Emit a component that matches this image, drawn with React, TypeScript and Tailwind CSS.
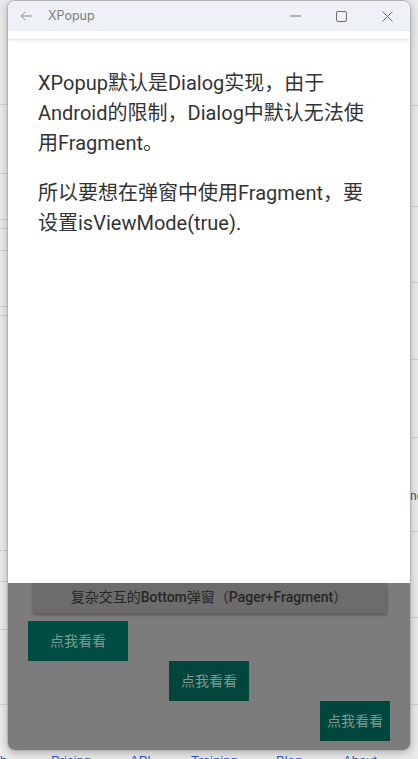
import React from "react";

const leftLines = [105, 174, 220, 229, 251, 307, 316, 551, 582, 630, 705];
const rightLines = [106, 207, 283, 360, 438, 532, 618, 705];

function Strip({ lines, side }: { lines: number[]; side: "l" | "r" }) {
  let prev = 0;
  return (
    <div className="flex h-full w-[7px] flex-col overflow-hidden bg-[#ebebeb]">
      {lines.map((p, i) => {
        const h = p - prev;
        prev = p;
        const dashed = side === "l" && p === 551;
        return (
          <div
            key={i}
            className={
              "relative shrink-0 border-b " +
              (dashed ? "border-dashed border-[#c4c4c4]" : "border-[#cfcfcf]")
            }
            style={{ height: h }}
          >
            {side === "r" && p === 532 ? (
              <span className="absolute left-[-1px] top-[52px] text-[12px] leading-none text-[#5a4a3a]">
                nd
              </span>
            ) : null}
          </div>
        );
      })}
    </div>
  );
}

export default function App() {
  return (
    <div
      className="flex h-[759px] w-[418px] flex-col overflow-hidden bg-[#ebebeb]"
      style={{ fontFamily: 'Roboto, "Noto Sans CJK SC", sans-serif' }}
    >
      <div className="flex h-[751px] shrink-0 flex-row">
        <Strip lines={leftLines} side="l" />
        <div className="relative z-10 flex h-[751px] w-[404px] shrink-0 flex-col overflow-hidden rounded-[8px] border border-[#b3b3b3] bg-white shadow-[0_2px_8px_rgba(0,0,0,0.25)]">
          {/* title bar */}
          <div className="flex h-[30px] shrink-0 items-center bg-[#eef2f6]">
            <div className="ml-[12px] flex h-[30px] w-[12px] items-center">
              <svg width="12" height="10" viewBox="0 0 12 10" fill="none">
                <path d="M12 5H1.2M5.2 1L1.2 5l4 4" stroke="#8f8f8f" strokeWidth="1" />
              </svg>
            </div>
            <span
              className="ml-[16px] text-[12.5px] text-[#7d7d7d]"
              style={{ fontFamily: 'Inter, "Noto Sans", sans-serif' }}
            >
              XPopup
            </span>
            <div className="ml-auto flex h-[30px]">
              <div className="flex w-[46px] items-center justify-center">
                <svg width="11" height="2" viewBox="0 0 11 2">
                  <path d="M0 1H11" stroke="#6f6f6f" strokeWidth="1" />
                </svg>
              </div>
              <div className="flex w-[46px] items-center justify-center">
                <svg width="11" height="11" viewBox="0 0 11 11" fill="none">
                  <rect x="0.5" y="0.5" width="10" height="10" rx="1.5" stroke="#6f6f6f" strokeWidth="1" />
                </svg>
              </div>
              <div className="flex w-[46px] items-center justify-center">
                <svg width="11" height="11" viewBox="0 0 11 11" fill="none">
                  <path d="M0.5 0.5L10.5 10.5M10.5 0.5L0.5 10.5" stroke="#6f6f6f" strokeWidth="1" />
                </svg>
              </div>
            </div>
          </div>
          {/* toolbar strip */}
          <div className="relative z-10 h-[8px] shrink-0 bg-white shadow-[0_1px_3px_rgba(0,0,0,0.14)]" />
          {/* popup panel */}
          <div className="h-[544px] shrink-0 bg-white px-[30px] pt-[29px] text-[20px] leading-[30px] text-[#333333]">
            <p>
              XPopup默认是Dialog实现，由于
              <br />
              Android的限制，Dialog中默认无法使
              <br />
              用Fragment。
            </p>
            <p className="mt-[20px]">
              所以要想在弹窗中使用Fragment，要
              <br />
              设置isViewMode(true).
            </p>
          </div>
          {/* dimmed page */}
          <div className="flex flex-1 flex-col bg-[#7c7c7c]">
            <div className="mx-[24px] flex h-[30px] items-center justify-center bg-[#6b6c6b] pb-[1px] text-[14px] font-normal text-[#262626] shadow-[1px_2px_3px_rgba(0,0,0,0.28)]">
              复杂交互的<span className="font-medium">Bottom</span>弹窗（<span className="font-medium">Pager+Fragment</span>）
            </div>
            <div className="mt-[8px] flex flex-col">
              <div className="ml-[20px] flex h-[40px] w-[100px] items-center justify-center self-start bg-[#004d43] text-[14px] text-[#7f9990]">
                点我看看
              </div>
              <div className="flex h-[40px] w-[80px] items-center justify-center self-center bg-[#00463c] text-[14px] text-[#7f9990]">
                点我看看
              </div>
              <div className="mr-[20px] flex h-[40px] w-[70px] items-center justify-center self-end bg-[#00463c] text-[14px] text-[#7f9990]">
                点我看看
              </div>
            </div>
          </div>
        </div>
        <Strip lines={rightLines} side="r" />
      </div>
      <div
        className="flex h-[8px] shrink-0 pt-[2px] text-[13px] leading-[16px] text-[#2457d6]"
        style={{ fontFamily: '"Liberation Sans", sans-serif' }}
      >
        <span className="w-[51px] shrink-0 pl-0">h</span>
        <span className="w-[79px] shrink-0">Pricing</span>
        <span className="w-[61px] shrink-0">API</span>
        <span className="w-[85px] shrink-0">Training</span>
        <span className="w-[67px] shrink-0">Blog</span>
        <span className="shrink-0">About</span>
      </div>
    </div>
  );
}
